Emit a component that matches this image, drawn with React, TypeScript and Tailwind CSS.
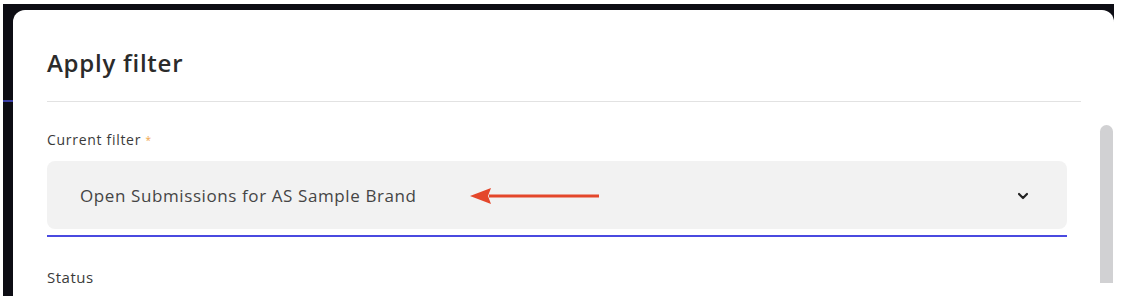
import React from "react";

export default function App() {
  return (
    <div className="w-[1124px] h-[296px] bg-white overflow-hidden pl-[3px] pt-[4px]" style={{ fontFamily: '"Open Sans", "Noto Sans", sans-serif' }}>
      <div className="relative w-[1111px] h-[292px] bg-[#0d0d14] pl-[10px] pt-[6px]">
        <div className="absolute left-0 top-[96px] w-[10px] h-[2px] bg-[#3b3fa6]" />
        <div className="h-full bg-white rounded-t-[12px] overflow-hidden">
          <div className="flex h-[273px] overflow-hidden">
            <div className="flex-1 pl-[34px] pr-[19px]">
              <div className="h-[92px] flex items-center pt-[14px] border-b border-[#e2e2e2]">
                <h1 className="text-[24px] font-semibold text-[#2b2b2b] tracking-[0.75px]">Apply filter</h1>
              </div>
              <div className="pt-[28px] text-[14px] text-[#3a3a3a] leading-[20px] tracking-[0.7px]">
                Current filter <span className="text-[#f0a44a] text-[10px] align-top">*</span>
              </div>
              <div className="mt-[11px] mr-[14px] h-[68px] rounded-[8px] bg-[#f2f2f2] flex items-center pl-[33px] pr-[38px] pt-[2px]">
                <span className="text-[17px] text-[#454545] tracking-[0.6px]">Open Submissions for AS Sample Brand</span>
                <svg className="ml-[52px]" width="132" height="18" viewBox="0 0 132 18">
                  <path d="M20 9 H130" stroke="#e4472b" strokeWidth="3" />
                  <path d="M1 9 L22 1 L19 9 L22 17 Z" fill="#e4472b" />
                </svg>
                <div className="flex-1" />
                <svg width="12" height="8" viewBox="0 0 12 8">
                  <path d="M2 2 L6 6 L10 2" stroke="#222" strokeWidth="2.2" fill="none" strokeLinecap="round" strokeLinejoin="round" />
                </svg>
              </div>
              <div className="mt-[6px] mr-[14px] h-[2px] bg-[#4a4ae0]" />
              <div className="pt-[30px] text-[15px] text-[#3a3a3a] leading-[20px] tracking-[0.5px]">Status</div>
            </div>
            <div className="w-[13px] pt-[115px] mr-[1px]">
              <div className="h-full bg-[#d1d1d3] rounded-t-[7px]" />
            </div>
          </div>
        </div>
      </div>
    </div>
  );
}
